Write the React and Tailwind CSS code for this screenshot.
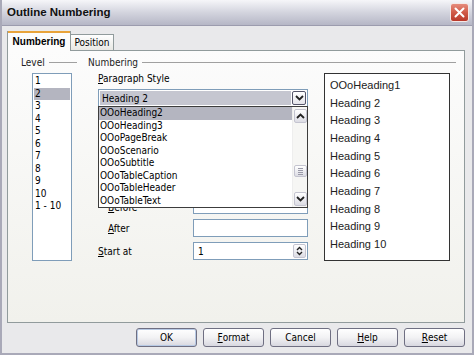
import React from "react"

const font = { fontFamily: '"Liberation Sans", Arial, sans-serif' }
const uiFont = { fontFamily: '"DejaVu Sans Condensed", "Liberation Sans", Arial, sans-serif' }

function Chevron({ up = false, className = "" }) {
    return (
        <svg width="9" height="6" viewBox="0 0 9 6" className={className}>
            <path d={up ? "M1 5 L4.5 1.5 L8 5" : "M1 1 L4.5 4.5 L8 1"} fill="none" stroke="#222" strokeWidth="1.8" />
        </svg>
    )
}

function ScrollButton({ up }) {
    return (
        <div className="flex h-[14px] w-[13px] items-center justify-center rounded-[2px] border border-[#c4c4d0] bg-gradient-to-b from-[#ffffff] to-[#dcdce4]">
            <Chevron up={up} />
        </div>
    )
}

function DialogButton({ children, primary = false }) {
    return (
        <button
            style={uiFont}
            className={
                "flex h-[19px] w-[61px] items-center justify-center rounded-[3px] border border-[#6f6f82] bg-gradient-to-b from-[#ffffff] via-[#f2f2f4] to-[#d8d8e0] text-[10px] text-black " +
                (primary ? "shadow-[inset_0_0_0_1px_#b7c9e4]" : "")
            }
        >
            {children}
        </button>
    )
}

const levels = ["1", "2", "3", "4", "5", "6", "7", "8", "9", "10", "1 - 10"]
const styles = ["OOoHeading2", "OOoHeading3", "OOoPageBreak", "OOoScenario", "OOoSubtitle", "OOoTableCaption", "OOoTableHeader", "OOoTableText"]
const preview = ["OOoHeading1", "Heading 2", "Heading 3", "Heading 4", "Heading 5", "Heading 6", "Heading 7", "Heading 8", "Heading 9", "Heading 10"]

export default function App() {
    return (
        <div style={font} className="relative h-[355px] w-[474px] overflow-hidden border-x-[2px] border-b-[2px] border-[#a9a9b8] bg-[#e9e9eb] text-black">
            {/* Title bar */}
            <div className="flex h-[26px] items-center justify-between bg-gradient-to-b from-[#f6f6f9] via-[#d3d4de] to-[#b6b7c6] pl-[5px] pr-[3px] border-b border-[#9c9cae]">
                <span className="text-[11.5px] font-bold text-[#111]">Outline Numbering</span>
                <div className="flex h-[19px] w-[19px] items-center justify-center rounded-[3px] border border-[#f4e8e6] bg-gradient-to-b from-[#e58b7c] via-[#d05a48] to-[#b8382a]">
                    <svg width="11" height="11" viewBox="0 0 11 11">
                        <path d="M1.5 1.5 L9.5 9.5 M9.5 1.5 L1.5 9.5" stroke="#fff" strokeWidth="2" strokeLinecap="round" />
                    </svg>
                </div>
            </div>

            <div style={uiFont} className="pl-[5px] pr-[7px] pt-[5px]">
                {/* Tabs */}
                <div className="flex h-[19px] items-end">
                    <div style={font} className="relative z-10 -mb-px flex h-[20px] w-[64px] items-center justify-center border-x border-[#919b9c] bg-[#fcfcfc] text-[10px] font-bold shadow-[inset_0_2px_0_#e8a33a]">
                        Numbering
                    </div>
                    <div className="flex h-[16px] w-[43px] items-center justify-center border-r border-t border-[#919b9c] bg-gradient-to-b from-[#ffffff] to-[#e8e8e4] text-[10px]">
                        Position
                    </div>
                </div>

                {/* Panel */}
                <div className="h-[273px] border border-[#919b9c] bg-gradient-to-b from-[#fcfcfc] to-[#f1f1ec]">
                    <div className="flex pt-[5px]">
                        {/* Level */}
                        <div className="w-[80px] pl-[13px]">
                            <div className="flex h-[12px] items-center text-[10px] text-[#222]">
                                <span>Level</span>
                                <div className="ml-[4px] mr-[11px] h-px flex-1 bg-[#a0a0a0]" />
                            </div>
                            <div className="ml-[11px] mt-[5px] h-[188px] w-[40px] border border-[#7f9db9] bg-white pt-px text-[10px]">
                                {levels.map((l) => (
                                    <div key={l} className={"mx-px h-[12.5px] pl-[1px] leading-[12.5px] " + (l === "2" ? "bg-[#b4b5c0]" : "")}>
                                        {l}
                                    </div>
                                ))}
                            </div>
                        </div>

                        {/* Numbering */}
                        <div className="flex-1">
                            <div className="flex h-[12px] items-center text-[10px] text-[#222]">
                                <span>Numbering</span>
                                <div className="ml-[4px] mr-[8px] h-px flex-1 bg-[#a0a0a0]" />
                            </div>
                            <div className="mt-[5px] flex pl-[10px]">
                                <div className="w-[210px] text-[10px]">
                                    <div className="h-[12px] leading-[12px]">
                                        <span className="underline">P</span>aragraph Style
                                    </div>
                                    <div className="relative mt-[4px] h-[18px]">
                                        <div className="flex h-[18px] items-center border border-[#7f9db9] bg-white p-px">
                                            <div className="flex h-full flex-1 items-center bg-[#c5c6d0] pl-[2px] text-[10px]">Heading 2</div>
                                            <div className="ml-px flex h-[14px] w-[14px] items-center justify-center rounded-[2px] border border-[#55556a] bg-gradient-to-b from-[#ffffff] to-[#e4e4ea]">
                                                <Chevron />
                                            </div>
                                        </div>

                                        {/* Dropdown popup */}
                                        <div className="absolute left-0 top-[17px] z-20 flex h-[102px] w-[210px] border border-[#3c3c3c] bg-white">
                                            <div className="flex-1">
                                                {styles.map((s, i) => (
                                                    <div key={s} className={"h-[12.5px] pl-[1px] leading-[12.5px] " + (i === 0 ? "bg-[#b4b5c0]" : "")}>
                                                        {s}
                                                    </div>
                                                ))}
                                            </div>
                                            <div className="flex w-[15px] flex-col items-center border-l border-[#eeeeee] bg-[#f6f6f4] pt-[2px] pb-[1px]">
                                                <ScrollButton up />
                                                <div className="flex-1" />
                                                <div className="mb-[15px] flex h-[12px] w-[13px] items-center justify-center rounded-[2px] border border-[#c4c4d0] bg-gradient-to-b from-[#ffffff] to-[#dcdce4]">
                                                    <div className="flex flex-col gap-[1px]">
                                                        <div className="h-px w-[5px] bg-[#9a9aa8]" />
                                                        <div className="h-px w-[5px] bg-[#9a9aa8]" />
                                                        <div className="h-px w-[5px] bg-[#9a9aa8]" />
                                                        <div className="h-px w-[5px] bg-[#9a9aa8]" />
                                                    </div>
                                                </div>
                                                <ScrollButton />
                                            </div>
                                        </div>
                                    </div>

                                    <div className="mt-[89px] flex h-[18px] items-end">
                                        <div className="w-[95px] pl-[10px] leading-[12px]">
                                            <span className="underline">B</span>efore
                                        </div>
                                        <div className="h-[18px] flex-1 border border-[#7f9db9] bg-white" />
                                    </div>
                                    <div className="mt-[5px] flex h-[18px] items-center">
                                        <div className="w-[95px] pl-[10px]">
                                            <span className="underline">A</span>fter
                                        </div>
                                        <div className="h-[18px] flex-1 border border-[#7f9db9] bg-white" />
                                    </div>
                                    <div className="mt-[5px] flex h-[18px] items-center">
                                        <div className="w-[95px]">
                                            <span className="underline">S</span>tart at
                                        </div>
                                        <div className="flex h-[18px] flex-1 items-center border border-[#7f9db9] bg-white pl-[4px] pr-px">
                                            <span className="flex-1">1</span>
                                            <div className="flex h-[14px] w-[13px] flex-col items-center justify-center rounded-[2px] border border-[#c4c4d0] bg-gradient-to-b from-[#ffffff] to-[#dcdce4]">
                                                <svg width="7" height="10" viewBox="0 0 7 10">
                                                    <path d="M1 4 L3.5 1.5 L6 4 M1 6 L3.5 8.5 L6 6" fill="none" stroke="#222" strokeWidth="1.4" />
                                                </svg>
                                            </div>
                                        </div>
                                    </div>
                                </div>

                                {/* Preview */}
                                <div style={font} className="ml-[16px] h-[188px] w-[126px] border border-[#333] bg-white pl-[5px] pt-[3px] text-[11px] text-[#222]">
                                    {preview.map((p) => (
                                        <div key={p} className="h-[17.67px] leading-[17.67px]">
                                            {p}
                                        </div>
                                    ))}
                                </div>
                            </div>
                        </div>
                    </div>
                </div>

                {/* Buttons */}
                <div className="mt-[5px] flex justify-end gap-[6px]">
                    <DialogButton primary>OK</DialogButton>
                    <DialogButton>
                        <span className="underline">F</span>ormat
                    </DialogButton>
                    <DialogButton>Cancel</DialogButton>
                    <DialogButton>
                        <span className="underline">H</span>elp
                    </DialogButton>
                    <DialogButton>
                        <span className="underline">R</span>eset
                    </DialogButton>
                </div>
            </div>
        </div>
    )
}
